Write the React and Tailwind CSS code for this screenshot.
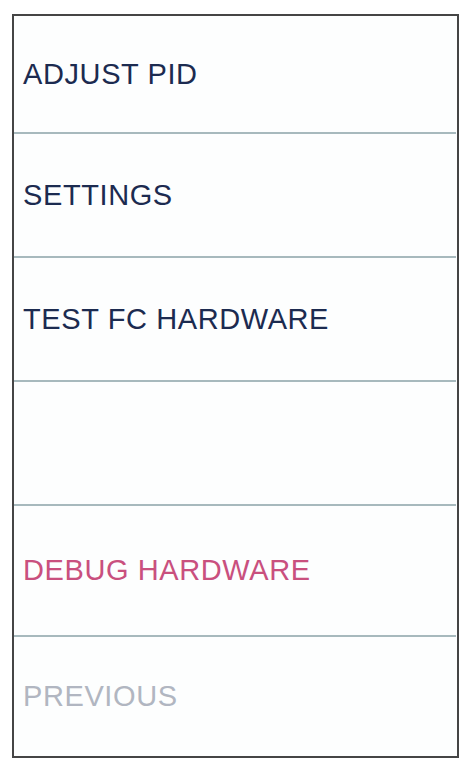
import React from 'react';

const items = [
    { label: 'ADJUST PID', h: 'h-[116px]', color: 'text-[#1c2b50]' },
    { label: 'SETTINGS', h: 'h-[122px]', color: 'text-[#1c2b50]' },
    { label: 'TEST FC HARDWARE', h: 'h-[122px]', color: 'text-[#1c2b50]' },
    { label: '', h: 'h-[122px]', color: 'text-[#1c2b50]' },
    { label: 'DEBUG HARDWARE', h: 'h-[129px]', color: 'text-[#c9507e]' },
    { label: 'PREVIOUS', h: 'h-[119px]', color: 'text-[#b1b6c1]' },
];

const App = () => {
    return (
        <div className="w-[474px] h-[770px] bg-white pl-[12px] pt-[14px]" style={{ fontFamily: '"Liberation Sans", Arial, sans-serif' }}>
            <div className="w-[447px] border-2 border-[#454545] bg-[#fdfefe] flex flex-col">
                {items.map((item, i) => (
                    <React.Fragment key={i}>
                        {i > 0 && <div className="h-[2px] bg-[#a7b9bd] mr-[1px]" />}
                        <button className={`${item.h} flex items-center pl-[9px] text-left`}>
                            <span className={`text-[29px] leading-none tracking-[0.6px] ${item.color}`}>{item.label}</span>
                        </button>
                    </React.Fragment>
                ))}
            </div>
        </div>
    );
};

export default App;
